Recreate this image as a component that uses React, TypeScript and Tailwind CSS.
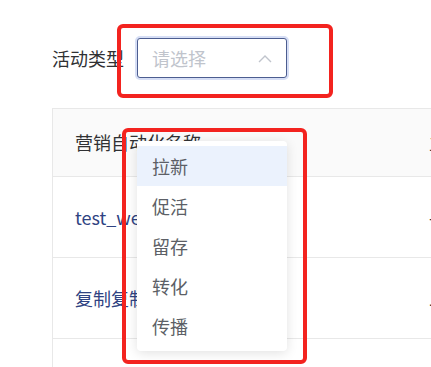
import React from 'react';

const options = ['拉新', '促活', '留存', '转化', '传播'];

const rows = [
  { name: 'test_wechat_automation', other: '-' },
  { name: '复制复制营销自动化', other: '二' },
];

export default function App() {
  return (
    <div
      className="relative w-[431px] h-[367px] overflow-hidden bg-white"
      style={{ fontFamily: '"Noto Sans CJK SC", "Noto Sans", sans-serif' }}
    >
      <div className="pl-[52px] pt-[38px]">
        {/* filter row */}
        <div className="flex items-center h-[40px]">
          <span className="w-[85px] text-[18px] text-[#303133] leading-none">活动类型</span>
          <div className="w-[150px] h-[40px] flex items-center justify-between pl-[14px] pr-[14px] border border-[#4c5d90] rounded-[3px] shadow-[0_0_0_2px_#d6def5] bg-white">
            <span className="text-[18px] text-[#c0c4cc] leading-none">请选择</span>
            <svg width="14" height="9" viewBox="0 0 14 9" fill="none">
              <path d="M1 8L7 2L13 8" stroke="#c0c4cc" strokeWidth="1.4" />
            </svg>
          </div>
        </div>

        {/* table */}
        <div className="mt-[30px] w-[500px] border-l border-t border-[#e8e8e8]">
          <div className="flex h-[68px] items-center bg-[#fafafa] border-b border-[#e8e8e8]">
            <div className="w-[354px] pl-[22px] text-[18px] text-[#303133] whitespace-nowrap overflow-hidden">营销自动化名称</div>
            <div className="pl-[22px] text-[18px] text-[#303133] whitespace-nowrap">主题</div>
          </div>
          {rows.map((r) => (
            <div key={r.name} className="flex h-[81px] items-center border-b border-[#e8e8e8]">
              <div className="w-[354px] pl-[22px] text-[18px] text-[#2f4382] whitespace-nowrap overflow-hidden">{r.name}</div>
              <div className="pl-[22px] text-[18px] text-[#303133] whitespace-nowrap">{r.other}</div>
            </div>
          ))}
          <div className="h-[60px]" />
        </div>
      </div>

      {/* dropdown menu */}
      <div className="absolute left-[137px] top-[141px] w-[150px] bg-white rounded-[4px] py-[5px] shadow-[0_2px_12px_rgba(0,0,0,0.12)]">
        {options.map((o, i) => (
          <div
            key={o}
            className={`h-[40px] flex items-center pl-[15px] text-[18px] text-[#5c5f66] ${i === 0 ? 'bg-[#ebf2fd]' : ''}`}
          >
            {o}
          </div>
        ))}
      </div>

      {/* annotation boxes */}
      <div className="absolute left-[117px] top-[24px] w-[216px] h-[74px] border-4 border-[#f3231f] rounded-[6px] pointer-events-none" />
      <div className="absolute left-[122px] top-[128px] w-[185px] h-[236px] border-4 border-[#f3231f] rounded-[6px] pointer-events-none" />
    </div>
  );
}
